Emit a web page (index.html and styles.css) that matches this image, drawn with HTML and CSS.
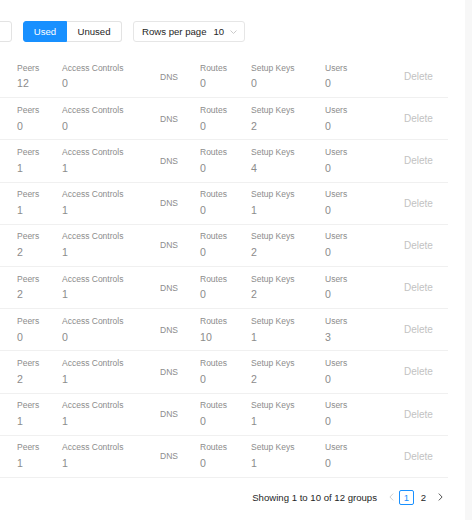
FILE: index.html
```html
<!DOCTYPE html>
<html>
<head>
<meta charset="utf-8">
<link rel="stylesheet" href="styles.css">
</head>
<body>
<div class="page">
  <div class="main">
    <div class="toolbar">
      <div class="search"></div>
      <div class="seg">
        <span class="seg-btn active">Used</span>
        <span class="seg-btn">Unused</span>
      </div>
      <div class="select">
        <span class="select-label">Rows per page</span>
        <span class="select-value">10</span>
        <svg class="select-arrow" width="7" height="4" viewBox="0 0 7 4"><path d="M0.5 0.5 L3.5 3.5 L6.5 0.5" fill="none" stroke="#c4c4c4" stroke-width="0.9"/></svg>
      </div>
    </div>

    <div class="table">
      <div class="row">
        <div class="cell"><div class="lbl">Peers</div><div class="val">12</div></div>
        <div class="cell"><div class="lbl">Access Controls</div><div class="val">0</div></div>
        <div class="cell mid"><div class="lbl">DNS</div></div>
        <div class="cell"><div class="lbl">Routes</div><div class="val">0</div></div>
        <div class="cell"><div class="lbl">Setup Keys</div><div class="val">0</div></div>
        <div class="cell"><div class="lbl">Users</div><div class="val">0</div></div>
        <div class="cell mid"><span class="del">Delete</span></div>
      </div>
      <div class="row">
        <div class="cell"><div class="lbl">Peers</div><div class="val">0</div></div>
        <div class="cell"><div class="lbl">Access Controls</div><div class="val">0</div></div>
        <div class="cell mid"><div class="lbl">DNS</div></div>
        <div class="cell"><div class="lbl">Routes</div><div class="val">0</div></div>
        <div class="cell"><div class="lbl">Setup Keys</div><div class="val">2</div></div>
        <div class="cell"><div class="lbl">Users</div><div class="val">0</div></div>
        <div class="cell mid"><span class="del">Delete</span></div>
      </div>
      <div class="row">
        <div class="cell"><div class="lbl">Peers</div><div class="val">1</div></div>
        <div class="cell"><div class="lbl">Access Controls</div><div class="val">1</div></div>
        <div class="cell mid"><div class="lbl">DNS</div></div>
        <div class="cell"><div class="lbl">Routes</div><div class="val">0</div></div>
        <div class="cell"><div class="lbl">Setup Keys</div><div class="val">4</div></div>
        <div class="cell"><div class="lbl">Users</div><div class="val">0</div></div>
        <div class="cell mid"><span class="del">Delete</span></div>
      </div>
      <div class="row">
        <div class="cell"><div class="lbl">Peers</div><div class="val">1</div></div>
        <div class="cell"><div class="lbl">Access Controls</div><div class="val">1</div></div>
        <div class="cell mid"><div class="lbl">DNS</div></div>
        <div class="cell"><div class="lbl">Routes</div><div class="val">0</div></div>
        <div class="cell"><div class="lbl">Setup Keys</div><div class="val">1</div></div>
        <div class="cell"><div class="lbl">Users</div><div class="val">0</div></div>
        <div class="cell mid"><span class="del">Delete</span></div>
      </div>
      <div class="row">
        <div class="cell"><div class="lbl">Peers</div><div class="val">2</div></div>
        <div class="cell"><div class="lbl">Access Controls</div><div class="val">1</div></div>
        <div class="cell mid"><div class="lbl">DNS</div></div>
        <div class="cell"><div class="lbl">Routes</div><div class="val">0</div></div>
        <div class="cell"><div class="lbl">Setup Keys</div><div class="val">2</div></div>
        <div class="cell"><div class="lbl">Users</div><div class="val">0</div></div>
        <div class="cell mid"><span class="del">Delete</span></div>
      </div>
      <div class="row">
        <div class="cell"><div class="lbl">Peers</div><div class="val">2</div></div>
        <div class="cell"><div class="lbl">Access Controls</div><div class="val">1</div></div>
        <div class="cell mid"><div class="lbl">DNS</div></div>
        <div class="cell"><div class="lbl">Routes</div><div class="val">0</div></div>
        <div class="cell"><div class="lbl">Setup Keys</div><div class="val">2</div></div>
        <div class="cell"><div class="lbl">Users</div><div class="val">0</div></div>
        <div class="cell mid"><span class="del">Delete</span></div>
      </div>
      <div class="row">
        <div class="cell"><div class="lbl">Peers</div><div class="val">0</div></div>
        <div class="cell"><div class="lbl">Access Controls</div><div class="val">0</div></div>
        <div class="cell mid"><div class="lbl">DNS</div></div>
        <div class="cell"><div class="lbl">Routes</div><div class="val">10</div></div>
        <div class="cell"><div class="lbl">Setup Keys</div><div class="val">1</div></div>
        <div class="cell"><div class="lbl">Users</div><div class="val">3</div></div>
        <div class="cell mid"><span class="del">Delete</span></div>
      </div>
      <div class="row">
        <div class="cell"><div class="lbl">Peers</div><div class="val">2</div></div>
        <div class="cell"><div class="lbl">Access Controls</div><div class="val">1</div></div>
        <div class="cell mid"><div class="lbl">DNS</div></div>
        <div class="cell"><div class="lbl">Routes</div><div class="val">0</div></div>
        <div class="cell"><div class="lbl">Setup Keys</div><div class="val">2</div></div>
        <div class="cell"><div class="lbl">Users</div><div class="val">0</div></div>
        <div class="cell mid"><span class="del">Delete</span></div>
      </div>
      <div class="row">
        <div class="cell"><div class="lbl">Peers</div><div class="val">1</div></div>
        <div class="cell"><div class="lbl">Access Controls</div><div class="val">1</div></div>
        <div class="cell mid"><div class="lbl">DNS</div></div>
        <div class="cell"><div class="lbl">Routes</div><div class="val">0</div></div>
        <div class="cell"><div class="lbl">Setup Keys</div><div class="val">1</div></div>
        <div class="cell"><div class="lbl">Users</div><div class="val">0</div></div>
        <div class="cell mid"><span class="del">Delete</span></div>
      </div>
      <div class="row">
        <div class="cell"><div class="lbl">Peers</div><div class="val">1</div></div>
        <div class="cell"><div class="lbl">Access Controls</div><div class="val">1</div></div>
        <div class="cell mid"><div class="lbl">DNS</div></div>
        <div class="cell"><div class="lbl">Routes</div><div class="val">0</div></div>
        <div class="cell"><div class="lbl">Setup Keys</div><div class="val">1</div></div>
        <div class="cell"><div class="lbl">Users</div><div class="val">0</div></div>
        <div class="cell mid"><span class="del">Delete</span></div>
      </div>
    </div>

    <div class="pager">
      <span class="pager-text">Showing 1 to 10 of 12 groups</span>
      <span class="pg-item pg-arrow">
        <svg width="5" height="8" viewBox="0 0 5 8"><path d="M4.2 0.6 L0.9 4 L4.2 7.4" fill="none" stroke="#cfcfcf" stroke-width="1"/></svg>
      </span>
      <span class="pg-item current">1</span>
      <span class="pg-item">2</span>
      <span class="pg-item pg-arrow">
        <svg width="5" height="8" viewBox="0 0 5 8"><path d="M0.8 0.6 L4.1 4 L0.8 7.4" fill="none" stroke="#555" stroke-width="1"/></svg>
      </span>
    </div>
  </div>
  <div class="gutter"></div>
</div>
</body>
</html>
```

FILE: styles.css
```css
* { box-sizing: border-box; }

html, body {
  margin: 0;
  padding: 0;
  background: #ffffff;
}

body {
  font-family: "Liberation Sans", Arial, sans-serif;
  color: #262626;
  overflow: hidden;
}

.page {
  display: flex;
  align-items: flex-start;
  width: 474px;
}

.main {
  width: 465px;
  flex: none;
  overflow: hidden;
}

.gutter {
  width: 7px;
  height: 520px;
  background: #f7f7f7;
  flex: none;
}

/* Toolbar */
.toolbar {
  display: flex;
  align-items: center;
  gap: 11px;
  margin-top: 21px;
  margin-left: -88px;
  height: 21px;
}

.search {
  width: 100px;
  height: 21px;
  border: 1px solid #e3e3e3;
  border-radius: 3px;
  flex: none;
}

.seg {
  display: flex;
  height: 21px;
  flex: none;
}

.seg-btn {
  display: flex;
  align-items: center;
  justify-content: center;
  height: 21px;
  font-size: 9.6px;
  color: #262626;
  border: 1px solid #e3e3e3;
}

.seg-btn:first-child {
  width: 44px;
  border-radius: 3px 0 0 3px;
}

.seg-btn:last-child {
  width: 55px;
  border-left: none;
  border-radius: 0 3px 3px 0;
}

.seg-btn.active {
  background: #1890ff;
  border-color: #1890ff;
  color: #ffffff;
}

.select {
  display: flex;
  align-items: center;
  width: 112px;
  height: 21px;
  padding-left: 8px;
  border: 1px solid #e6e6e6;
  border-radius: 3px;
  font-size: 9.6px;
  color: #262626;
  flex: none;
}

.select-value {
  margin-left: 7px;
}

.select-arrow {
  margin-left: 6px;
}

/* Table */
.table {
  margin-top: 14px;
  width: 448px;
}

.row {
  display: grid;
  grid-template-columns: 45px 98px 40px 51px 74px 79px 1fr;
  height: 42.2px;
  padding-left: 17px;
  border-bottom: 1px solid #f0f0f0;
}

.cell {
  padding-top: 6.6px;
}

.cell.mid {
  padding-top: 0;
  display: flex;
  align-items: center;
}

.lbl {
  font-size: 8.5px;
  line-height: 10px;
  color: #8c8c8c;
  white-space: nowrap;
}

.val {
  margin-top: 4.8px;
  font-size: 10.6px;
  line-height: 13px;
  color: #8c8c8c;
}

.del {
  font-size: 10px;
  color: #c2c2c2;
}

/* Pagination */
.pager {
  display: flex;
  align-items: center;
  justify-content: flex-end;
  width: 448px;
  margin-top: 12px;
  height: 15px;
}

.pager-text {
  font-size: 9.6px;
  color: #262626;
  margin-right: 8px;
}

.pg-item {
  display: flex;
  align-items: center;
  justify-content: center;
  width: 15px;
  height: 15px;
  font-size: 9.6px;
  color: #262626;
  margin-left: 2px;
  border: 1px solid transparent;
  border-radius: 2px;
}

.pg-item.pg-arrow {
  width: 12px;
  margin-left: 0;
}

.pg-item.pg-arrow:last-child {
  width: 15px;
  margin-left: 2px;
}

.pg-item.current {
  border-color: #1890ff;
  color: #1890ff;
}
```
